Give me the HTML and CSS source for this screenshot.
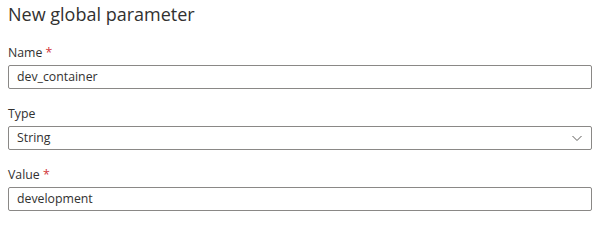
FILE: index.html
```html
<!DOCTYPE html>
<html lang="en">
<head>
  <meta charset="UTF-8">
  <title>New global parameter</title>
  <link rel="stylesheet" href="styles.css">
</head>
<body>
  <div class="panel">
    <h1 class="title">New global parameter</h1>

    <div class="field">
      <label class="label">Name <span class="req">*</span></label>
      <div class="input">dev_container</div>
    </div>

    <div class="field">
      <label class="label">Type</label>
      <div class="input select">
        <span>String</span>
        <svg class="chevron" width="12" height="12" viewBox="0 0 12 12">
          <path d="M1.5 4 L6 8.5 L10.5 4" fill="none" stroke="#605e5c" stroke-width="1"/>
        </svg>
      </div>
    </div>

    <div class="field">
      <label class="label">Value <span class="req">*</span></label>
      <div class="input">development</div>
    </div>
  </div>
</body>
</html>
```

FILE: styles.css
```css
body {
  margin: 0;
  background: #fff;
  color: #323130;
  font-family: "Open Sans", "Noto Sans", sans-serif;
}
.panel {
  padding: 2px 11px 0 8px;
}
.title {
  margin: 0 0 18px;
  font-size: 18px;
  font-weight: 400;
  line-height: 24px;
  color: #323130;
}
.field {
  margin-bottom: 16px;
}
.label {
  display: block;
  font-size: 12.3px;
  line-height: 18px;
  margin-bottom: 3px;
}
.req {
  color: #d13438;
}
.input {
  box-sizing: border-box;
  height: 24px;
  border: 1px solid #8a8886;
  border-radius: 2px;
  padding: 0 8px;
  font-size: 12.3px;
  line-height: 22px;
}
.select {
  display: flex;
  justify-content: space-between;
  align-items: center;
}
.chevron {
  display: block;
}
```
